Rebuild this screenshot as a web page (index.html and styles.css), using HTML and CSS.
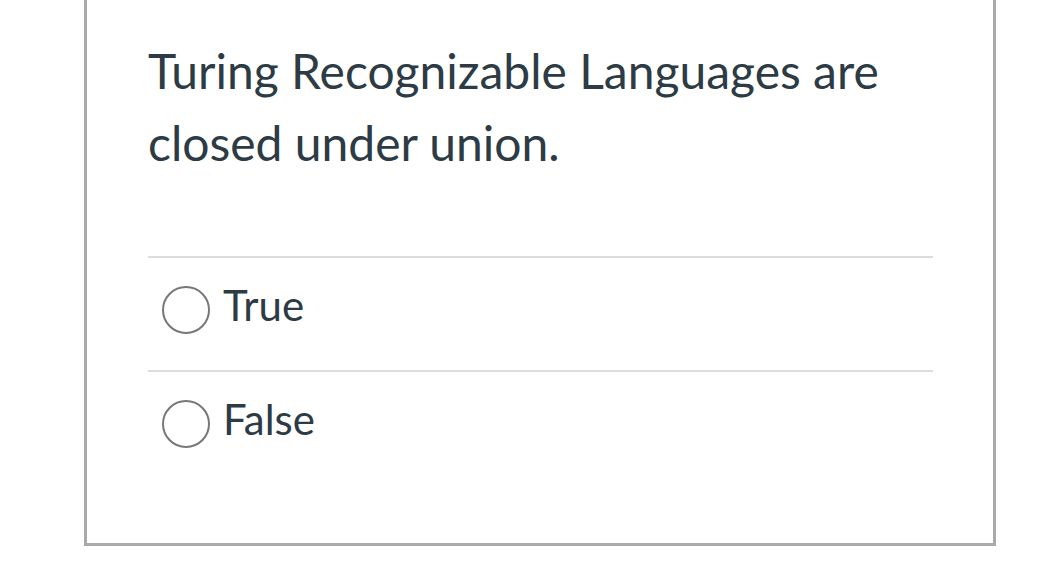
FILE: index.html
```html
<!DOCTYPE html>
<html lang="en">
<head>
<meta charset="utf-8">
<title>Question</title>
<link rel="stylesheet" href="styles.css">
</head>
<body>
<div class="card">
  <div class="question">Turing Recognizable Languages are closed under union.</div>
  <div class="answers">
    <label class="answer">
      <span class="radio"></span>
      <span class="label">True</span>
    </label>
    <label class="answer">
      <span class="radio"></span>
      <span class="label">False</span>
    </label>
  </div>
</div>
</body>
</html>
```

FILE: styles.css
```css
html, body {
  margin: 0;
  padding: 0;
  background: #ffffff;
}
body {
  font-family: Lato, "Noto Sans", sans-serif;
  color: #2d3b45;
}
.card {
  box-sizing: border-box;
  margin-left: 84px;
  width: 912px;
  height: 546px;
  border: 3px solid #a9a9a9;
  border-top: none;
  padding: 35px 60px 0 61px;
}
.question {
  font-size: 48px;
  line-height: 72px;
  width: 780px;
}
.answers {
  margin-top: 77px;
}
.answer {
  display: flex;
  align-items: flex-start;
  box-sizing: border-box;
  height: 114px;
  border-top: 2px solid #dcdcdc;
  padding: 23px 0 0 14px;
}
.radio {
  box-sizing: border-box;
  width: 48px;
  height: 48px;
  margin-top: 5px;
  border: 2.5px solid #777777;
  border-radius: 50%;
  flex: none;
}
.label {
  margin-left: 13px;
  font-size: 42px;
  line-height: 48px;
}
```
